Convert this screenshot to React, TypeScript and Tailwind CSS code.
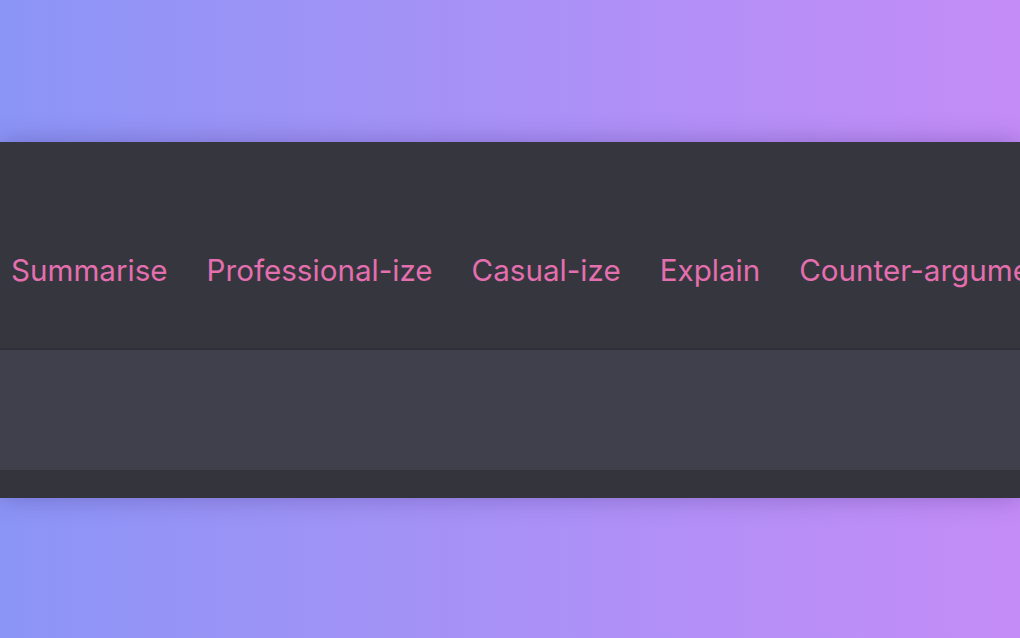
import React from 'react';

const actions = ['Summarise', 'Professional-ize', 'Casual-ize', 'Explain', 'Counter-argument'];

const App: React.FC = () => {
  return (
    <div className="h-[638px] w-[1020px] overflow-hidden bg-gradient-to-r from-[#8b95f6] to-[#c48cf7] pt-[142px]">
      {/* 面板 */}
      <div className="flex flex-col bg-[#36363f] shadow-[0_0_24px_rgba(60,40,120,0.35)]">
        <div className="flex h-[206px] items-end pb-[62px]">
          <div
            className="flex gap-[39px] whitespace-nowrap pl-[11px] text-[29.6px] leading-none text-[#e46fae]"
            style={{ fontFamily: 'Inter, "Noto Sans", sans-serif' }}
          >
            {actions.map((a) => (
              <span key={a}>{a}</span>
            ))}
          </div>
        </div>
        <div className="h-[2px] bg-[#2f3037]" />
        <div className="h-[120px] bg-[#3f404b]" />
        <div className="h-[28px] bg-[#34353c]" />
      </div>
    </div>
  );
};

export default App;
